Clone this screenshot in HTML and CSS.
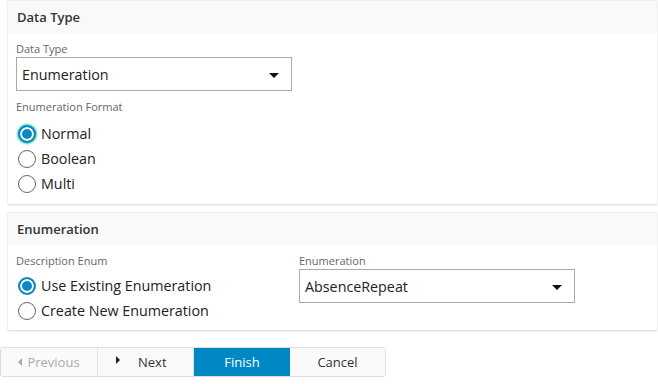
FILE: index.html
```html
<!DOCTYPE html>
<html>
<head>
<meta charset="utf-8">
<link rel="stylesheet" href="styles.css">
</head>
<body>
<div class="page">
  <section class="panel">
    <div class="panel-head">Data Type</div>
    <div class="panel-body">
      <div class="field">
        <div class="label">Data Type</div>
        <div class="select"><span>Enumeration</span><span class="caret"></span></div>
      </div>
      <div class="field">
        <div class="label">Enumeration Format</div>
        <div class="radios">
          <div class="radio checked focus"><span class="dot"></span>Normal</div>
          <div class="radio"><span class="dot"></span>Boolean</div>
          <div class="radio"><span class="dot"></span>Multi</div>
        </div>
      </div>
    </div>
  </section>
  <section class="panel second">
    <div class="panel-head">Enumeration</div>
    <div class="panel-body cols">
      <div class="col">
        <div class="label">Description Enum</div>
        <div class="radios">
          <div class="radio checked"><span class="dot"></span>Use Existing Enumeration</div>
          <div class="radio"><span class="dot"></span>Create New Enumeration</div>
        </div>
      </div>
      <div class="col">
        <div class="label">Enumeration</div>
        <div class="select"><span>AbsenceRepeat</span><span class="caret"></span></div>
      </div>
    </div>
  </section>
  <div class="buttons">
    <div class="btn prev"><span class="tri left"></span>Previous</div>
    <div class="btn next"><span class="tri right"></span><span class="btn-text">Next</span></div>
    <div class="btn finish">Finish</div>
    <div class="btn cancel">Cancel</div>
  </div>
</div>
</body>
</html>
```
FILE: styles.css
```css
* { box-sizing: border-box; }
html, body { margin: 0; padding: 0; background: #fff; }
body { font-family: "Open Sans", "Noto Sans", sans-serif; color: #333; }
.page { padding: 0 1px 0 0; }
.panel {
  margin-left: 8px;
  background: #fff;
  box-shadow: 0 1px 2px rgba(0,0,0,0.18);
  border-top: 1px solid #eee;
}
.panel.second { margin-top: 8px; }
.panel-head {
  height: 32px;
  background: #f9f9f9;
  font-size: 13px;
  font-weight: 600;
  color: #333;
  padding-left: 9px;
  line-height: 32px;
}
.panel-body { padding: 8px 9px 8px 8px; }
.field + .field { margin-top: 8px; }
.label { font-size: 11px; color: #666; line-height: 16px; height: 16px; }
.select {
  width: 276px;
  height: 34px;
  border: 1px solid #aaa;
  display: flex;
  align-items: center;
  justify-content: space-between;
  padding: 0 12px 0 5px;
  font-size: 14.3px;
  color: #222;
}
.caret {
  width: 0; height: 0;
  border-left: 5px solid transparent;
  border-right: 5px solid transparent;
  border-top: 5px solid #111;
  margin-top: 2px;
}
.radios { margin-top: 6px; }
.cols .radios { margin-top: 4px; }
.radio {
  display: flex;
  align-items: center;
  font-size: 14.3px;
  color: #222;
  height: 25px;
}
.dot {
  width: 18px; height: 18px;
  border: 1px solid #666;
  border-radius: 50%;
  margin: 0 5px 0 2px;
  display: inline-block;
  flex: none;
}
.radio.checked .dot {
  border: 2px solid #0a8ac2;
  background: #0a8ac2;
  box-shadow: inset 0 0 0 2px #fff;
}
.radio.checked.focus .dot {
  box-shadow: inset 0 0 0 2px #fff, 0 0 2px 1px #3ad0b0;
}
.cols { display: flex; padding-bottom: 7px; }
.cols .col:first-child { width: 283px; }
.buttons {
  display: flex;
  margin-top: 17px;
  width: 386px;
  border: 1px solid #ddd;
  border-radius: 3px;
  height: 30px;
  overflow: hidden;
}
.btn {
  width: 96px;
  height: 28px;
  display: flex;
  align-items: center;
  justify-content: center;
  font-size: 13px;
  color: #333;
  background: #fafafa;
  border-right: 1px solid #e2e2e2;
}
.btn.cancel { border-right: none; flex: 1; }
.btn.prev { color: #aaa; width: 97px; }
.btn.finish { background: #0088c4; color: #fff; border-right: none; width: 96px; }
.btn.next { justify-content: flex-start; padding-left: 18px; }
.btn.next .btn-text { margin-left: 18px; }
.tri { width: 0; height: 0; display: inline-block; }
.tri.left {
  border-top: 4px solid transparent;
  border-bottom: 4px solid transparent;
  border-right: 4px solid #aaa;
  margin-right: 5px;
}
.tri.right {
  border-top: 4px solid transparent;
  border-bottom: 4px solid transparent;
  border-left: 4px solid #222;
  margin-top: -4px;
}
```
